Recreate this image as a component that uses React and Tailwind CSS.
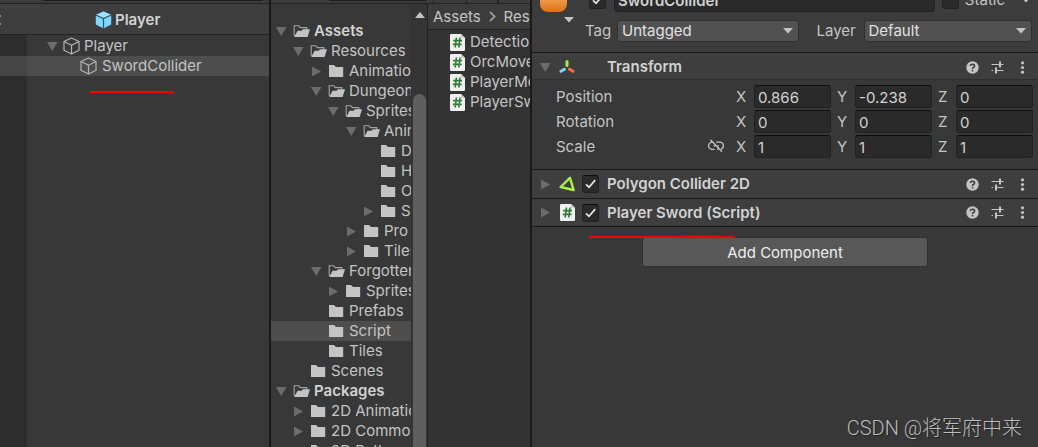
import React from 'react';

const treeRows = [
  { name: 'Assets', pad: 'pl-[5px]', arrow: 'down', open: true, bold: true },
  { name: 'Resources', pad: 'pl-[22px]', arrow: 'down', open: true },
  { name: 'Animations', pad: 'pl-[40px]', arrow: 'right' },
  { name: 'Dungeon', pad: 'pl-[40px]', arrow: 'down', open: true },
  { name: 'Sprites', pad: 'pl-[57px]', arrow: 'down', open: true },
  { name: 'Animations', pad: 'pl-[75px]', arrow: 'down', open: true },
  { name: 'Demon', pad: 'pl-[92px]' },
  { name: 'Hero', pad: 'pl-[92px]' },
  { name: 'Orc', pad: 'pl-[92px]' },
  { name: 'Slime', pad: 'pl-[92px]', arrow: 'right' },
  { name: 'Pro', pad: 'pl-[75px]', arrow: 'right' },
  { name: 'Tiles', pad: 'pl-[75px]', arrow: 'right' },
  { name: 'Forgotten', pad: 'pl-[40px]', arrow: 'down', open: true },
  { name: 'Sprites', pad: 'pl-[57px]', arrow: 'right' },
  { name: 'Prefabs', pad: 'pl-[40px]' },
  { name: 'Script', pad: 'pl-[40px]', selected: true },
  { name: 'Tiles', pad: 'pl-[40px]' },
  { name: 'Scenes', pad: 'pl-[22px]' },
  { name: 'Packages', pad: 'pl-[5px]', arrow: 'down', open: true, bold: true },
  { name: '2D Animation', pad: 'pl-[22px]', arrow: 'right' },
  { name: '2D Common', pad: 'pl-[22px]', arrow: 'right' },
  { name: '2D Path', pad: 'pl-[22px]', arrow: 'right' },
];

const scripts = ['DetectionZone', 'OrcMovement', 'PlayerMovement', 'PlayerSword'];

const vectors = [
  { label: 'Position', values: ['0.866', '-0.238', '0'] },
  { label: 'Rotation', values: ['0', '0', '0'] },
  { label: 'Scale', values: ['1', '1', '1'], link: true },
];

const Arrow = ({ dir }) => (
  <svg className="h-[11px] w-[11px] shrink-0" viewBox="0 0 11 11" fill="#6c6c6c">
    {dir === 'down' && <path d="M0 1h10.5L5.25 10z" />}
    {dir === 'right' && <path d="M1 .5v10L10 5.5z" />}
  </svg>
);

const Caret = ({ className }) => (
  <svg className={className} width="10" height="6" viewBox="0 0 10 6" fill="#c4c4c4">
    <path d="M0 0h10L5 5.5z" />
  </svg>
);

const Folder = ({ open }) => (
  <svg className="h-3 w-[17px] shrink-0" viewBox="0 0 17 12">
    {open ? (
      <>
        <path d="M1.2 11V.8h4.6l1.6 1.8h6.4V5" fill="none" stroke="#a4a4a4" strokeWidth="1.1" />
        <path d="M1.2 12 4.6 5.8h4L10 4.3h7L14.6 12z" fill="#c4c4c4" />
      </>
    ) : (
      <path d="M1 0h5l2 2h7.2v10H1z" fill="#c4c4c4" />
    )}
  </svg>
);

const Cube = ({ solid }) =>
  solid ? (
    <svg className="h-[18px] w-[17px] shrink-0" viewBox="0 0 17 18">
      <path d="M8.5.5 16.2 4v9.4l-7.7 4.1-7.7-4.1V4z" fill="#7fd6fd" />
      <path d="M8.5.5 16.2 4 8.5 7.6.8 4z" fill="#9be2ff" />
      <path d="M.8 4l7.7 3.6L16.2 4M8.5 7.6v9.9" fill="none" stroke="#2c5468" strokeWidth="1.2" />
    </svg>
  ) : (
    <svg className="h-[18px] w-[17px] shrink-0" viewBox="0 0 17 18" fill="none" stroke="#b4b4b4" strokeWidth="1.2" strokeLinejoin="round">
      <path d="M8.5 1 16 4.5v8.8L8.5 17 1 13.3V4.5zM1 4.5l7.5 3.8L16 4.5M8.5 8.3V17" />
    </svg>
  );

const ScriptIcon = () => (
  <svg className="h-[17px] w-[15px] shrink-0" viewBox="0 0 15 17">
    <path d="M1.2 0H11l4 3.8v12q0 1.2-1.2 1.2H1.2Q0 17 0 15.8V1.2Q0 0 1.2 0z" fill="#f0f0f0" />
    <path d="M11 0v3.8h4z" fill="#c4c4c4" />
    <path d="M6.4 3.5 5.2 13.5M10 3.5 8.8 13.5M3.2 6.6h8.8M2.8 10.4h8.8" stroke="#2f7a35" strokeWidth="1.6" />
  </svg>
);

const TransformIcon = () => (
  <svg className="h-4 w-4" viewBox="0 0 16 16" fill="none" strokeWidth="3" strokeLinecap="round">
    <path d="M8 2.5v4" stroke="#a5ee4b" />
    <path d="M5.4 10.3 2 12.2" stroke="#7fd6fd" />
    <path d="m10.6 10.3 3.4 1.9" stroke="#ff6b40" />
  </svg>
);

const PolygonIcon = () => (
  <svg className="h-4 w-4" viewBox="0 0 16 16" fill="none" stroke="#a5f24c" strokeWidth="2.4">
    <path d="M11 1.8 14.6 14 1.6 11z" strokeLinejoin="round" />
  </svg>
);

const Unlink = () => (
  <svg className="h-4 w-4" viewBox="0 0 16 16" fill="none" stroke="#c4c4c4" strokeWidth="1.3">
    <path d="M5 3.2H4.2a3.6 3.6 0 0 0 0 7.2h2.4M8.2 3.2h3.6a3.6 3.6 0 0 1 1.2 7M9 10.4h1.2M5.5 6.8h2M9.6 6.8h1.4M2.5.8l11.5 12" />
  </svg>
);

const HeaderButtons = () => (
  <div className="ml-auto flex items-center gap-3 pr-[13px]">
    <button type="button" aria-label="Help">
      <svg className="block h-[13px] w-[13px]" viewBox="0 0 13 13">
        <circle cx="6.5" cy="6.5" r="6.2" fill="#c4c4c4" />
        <path d="M4.4 5.1q0-1.9 2.1-1.9t2.1 1.7q0 1-1.2 1.6-.9.5-.9 1.4" fill="none" stroke="#3c3c3c" strokeWidth="1.5" />
        <path d="M5.7 8.9h1.6v1.5H5.7z" fill="#3c3c3c" />
      </svg>
    </button>
    <button type="button" aria-label="Presets">
      <svg className="block h-[13px] w-[13px]" viewBox="0 0 13 13" fill="none" stroke="#c4c4c4">
        <path d="M.5 3.5H8M9 3.5h3.5M.5 9.5H2M4.5 9.5h8" strokeWidth="1.2" />
        <path d="M9 .5v6M5 6.5v6" strokeWidth="2" />
      </svg>
    </button>
    <button type="button" aria-label="More" className="pl-1">
      <svg className="block h-[13px] w-[5px]" viewBox="0 0 5 13" fill="#c4c4c4">
        <circle cx="2.5" cy="1.8" r="1.6" />
        <circle cx="2.5" cy="6.5" r="1.6" />
        <circle cx="2.5" cy="11.2" r="1.6" />
      </svg>
    </button>
  </div>
);

const Checkbox = ({ label, checked }) => (
  <span className="relative block h-[18px] w-[17px] shrink-0">
    <input
      type="checkbox"
      aria-label={label}
      defaultChecked={checked}
      className="peer block h-full w-full appearance-none rounded-[3px] border border-[#212121] border-t-[#0d0d0d] bg-[#2a2a2a]"
    />
    <svg className="pointer-events-none absolute inset-0 hidden h-full w-full peer-checked:block" viewBox="0 0 17 18" fill="none" stroke="#e4e4e4" strokeWidth="1.8">
      <path d="m4 9.3 3 3L13.2 5.2" />
    </svg>
  </span>
);

const Dropdown = ({ id, label, value, labelClass }) => (
  <div className="flex flex-1 items-center">
    <label htmlFor={id} className={`shrink-0 ${labelClass}`}>{label}</label>
    <div className="relative min-w-0 grow">
      <select id={id} className="block h-[22px] w-full appearance-none rounded-[3px] border border-[#303030] bg-[#515151] pl-1 text-[#e0e0e0]">
        <option>{value}</option>
      </select>
      <Caret className="pointer-events-none absolute top-2 right-1.5" />
    </div>
  </div>
);

const ComponentHeader = ({ title, icon, checkbox, arrow, className }) => (
  <div className={`flex items-center border-t border-[#1a1a1a] bg-[#3e3e3e] pl-2 ${className}`}>
    <Arrow dir={arrow} />
    <span className="ml-2 flex w-4 justify-center">{icon}</span>
    <span className="ml-[7px] w-[17px]">{checkbox && <Checkbox label={title} checked />}</span>
    <h2 className="ml-2 font-semibold text-[#d2d2d2]">{title}</h2>
    <HeaderButtons />
  </div>
);

const Hierarchy = () => (
  <section className="relative flex w-[271px] shrink-0 flex-col border-r-2 border-[#191919]">
    <div className="h-1 shrink-0 border-b border-[#232323] bg-[#3c3c3c] pr-1.5 pl-[43px]">
      <div className="h-px rounded-b bg-[#1e1e1e]" />
    </div>
    <header className="flex h-[31px] shrink-0 items-center border-b border-[#232323] bg-[#3e3e3e] pt-0.5">
      <svg className="h-3 w-0.5" viewBox="0 0 2 12" fill="#8a8a8a">
        <path d="M0 1h1v2H0zM0 9h1v2H0z" />
      </svg>
      <span className="ml-[93px]"><Cube solid /></span>
      <h2 className="ml-[3px] font-semibold text-[#d2d2d2]">Player</h2>
    </header>
    <div className="flex grow flex-col bg-linear-to-r from-[#2d2d2d] from-[27px] to-[#383838] to-[27px] pt-px">
      <div className="flex h-5 items-center pl-[47px]">
        <Arrow dir="down" />
        <span className="mr-1 ml-[5px]"><Cube /></span>
        Player
      </div>
      <div className="flex h-5 items-center bg-linear-to-r from-[#464646] from-[27px] to-[#4d4d4d] to-[27px] pl-[80px]">
        <span className="mr-[5px]"><Cube /></span>
        SwordCollider
      </div>
    </div>
    <svg className="absolute top-[90px] left-[89px]" width="86" height="5" viewBox="0 0 86 5" fill="none" stroke="#fe0000" strokeWidth="2" strokeLinecap="round">
      <path d="M1.5 2H76l8 .8" />
    </svg>
  </section>
);

const Project = () => (
  <section className="flex w-[261px] shrink-0 flex-col border-r-2 border-[#191919]">
    <div className="flex h-1 shrink-0 border-b border-[#232323] bg-[#3c3c3c] pl-[58px]">
      <div className="h-px w-[98px] rounded-b bg-[#1e1e1e]" />
      <div className="ml-1.5 w-[34px] border-x border-[#232323]" />
      <div className="w-8 border-r-2 border-[#232323]" />
    </div>
    <div className="flex min-h-0 grow">
      <ul className="w-[140px] shrink-0 overflow-hidden pt-[17px]">
        {treeRows.map((row, i) => (
          <li key={i} className={`flex h-5 items-center whitespace-nowrap ${row.pad} ${row.selected ? 'bg-[#4d4d4d]' : ''}`}>
            <Arrow dir={row.arrow} />
            <span className="mr-1 ml-1.5"><Folder open={row.open} /></span>
            <span className={row.bold ? 'font-semibold text-[#d2d2d2]' : ''}>{row.name}</span>
          </li>
        ))}
      </ul>
      <div className="flex w-4 shrink-0 flex-col items-center border-l border-[#323232] bg-[#353535] pt-2">
        <svg width="10" height="6" viewBox="0 0 10 6" fill="#c4c4c4">
          <path d="M0 6h10L5 0z" />
        </svg>
        <div className="mt-[76px] w-[13px] grow rounded-t-full bg-[#5f5f5f]" />
      </div>
      <div className="min-w-0 grow overflow-hidden border-l border-[#232323] bg-[#333333]">
        <nav className="flex h-[26px] items-center border-b border-[#232323] bg-[#3c3c3c] pl-[5px] whitespace-nowrap">
          <a href="#">Assets</a>
          <svg className="mx-2 h-[11px] w-[7px] shrink-0" viewBox="0 0 7 11" fill="none" stroke="#9a9a9a" strokeWidth="1.8">
            <path d="m1 1 4.7 4.5L1 10" />
          </svg>
          <a href="#">Resources</a>
        </nav>
        <ul className="pt-0.5">
          {scripts.map((name) => (
            <li key={name} className="flex h-5 items-center gap-[5px] pl-[22px]">
              <ScriptIcon />
              {name}
            </li>
          ))}
        </ul>
      </div>
    </div>
  </section>
);

const Inspector = () => (
  <section className="min-w-0 grow overflow-hidden">
    <div className="-mt-3 flex h-16 bg-[#3c3c3c] pr-1.5 pl-2">
      <div className="w-[43px] shrink-0">
        <div className="h-6 w-[27px] rounded-lg bg-linear-to-b from-[#ffc070] to-[#e07010]" />
        <Caret className="mt-[5px] ml-6" />
      </div>
      <div className="min-w-0 grow">
        <div className="flex h-6 items-center">
          <span className="ml-1.5"><Checkbox label="Active" checked /></span>
          <input
            aria-label="Name"
            defaultValue="SwordCollider"
            className="ml-2 h-6 min-w-0 grow rounded-[3px] border border-[#212121] bg-[#2a2a2a] px-[3px] font-semibold text-[#d2d2d2]"
          />
          <label className="ml-[7px] flex items-center gap-1.5">
            <Checkbox label="Static" />
            Static
          </label>
          <Caret className="mr-px ml-4" />
        </div>
        <div className="mt-2 flex gap-[18px]">
          <Dropdown id="tag" label="Tag" value="Untagged" labelClass="w-[34px] pl-0.5" />
          <Dropdown id="layer" label="Layer" value="Default" labelClass="w-[47px]" />
        </div>
      </div>
    </div>

    <ComponentHeader title="Transform" arrow="down" icon={<TransformIcon />} className="h-[27px] pt-0.5" />
    <div className="flex flex-col gap-0.5 border-t border-[#303030] pt-[5px] pr-[5px] pb-[11px] pl-6">
      {vectors.map((row) => (
        <div key={row.label} className="flex h-[23px] items-center">
          <span className="flex w-[180px] shrink-0 items-center justify-between pr-3">
            {row.label}
            {row.link && <button type="button" aria-label="Constrain proportions"><Unlink /></button>}
          </span>
          <div className="grid grow grid-cols-3 gap-1.5">
            {['X', 'Y', 'Z'].map((axis, i) => (
              <label key={axis} className="flex items-center">
                <span className="w-[18px] shrink-0">{axis}</span>
                <input
                  defaultValue={row.values[i]}
                  className="h-[23px] w-full min-w-0 rounded-[3px] border border-[#212121] border-t-[#0d0d0d] bg-[#2a2a2a] px-[3px] pt-0.5 text-[#d2d2d2]"
                />
              </label>
            ))}
          </div>
        </div>
      ))}
    </div>

    <ComponentHeader title="Polygon Collider 2D" arrow="right" icon={<PolygonIcon />} checkbox className="h-[29px]" />
    <ComponentHeader title="Player Sword (Script)" arrow="right" icon={<ScriptIcon />} checkbox className="h-[28px]" />
    <div className="relative border-t border-[#1a1a1a] pt-2.5">
      <svg className="absolute top-[7px] left-[56px]" width="150" height="6" viewBox="0 0 150 6" fill="none" stroke="#fe0000" strokeWidth="2" strokeLinecap="round">
        <path d="M2 3h80l40-.6 24 .8" />
      </svg>
      <button type="button" className="mx-auto block h-[30px] w-[286px] rounded-[3px] border border-[#303030] bg-[#585858] pt-px text-[#eeeeee]">
        Add Component
      </button>
    </div>
  </section>
);

const App = () => (
  <div className="relative flex h-screen overflow-hidden bg-[#383838] font-['Inter',sans-serif] text-[15px] leading-5 text-[#c4c4c4]">
    <Hierarchy />
    <Project />
    <Inspector />
    <p className="absolute right-4 bottom-[7px] font-['Roboto','Noto_Sans_CJK_SC',sans-serif] text-xl leading-6 font-light text-[#bcbcbc] [text-shadow:1px_1px_1px_#222]">
      CSDN @将军府中来
    </p>
  </div>
);

export default App;
